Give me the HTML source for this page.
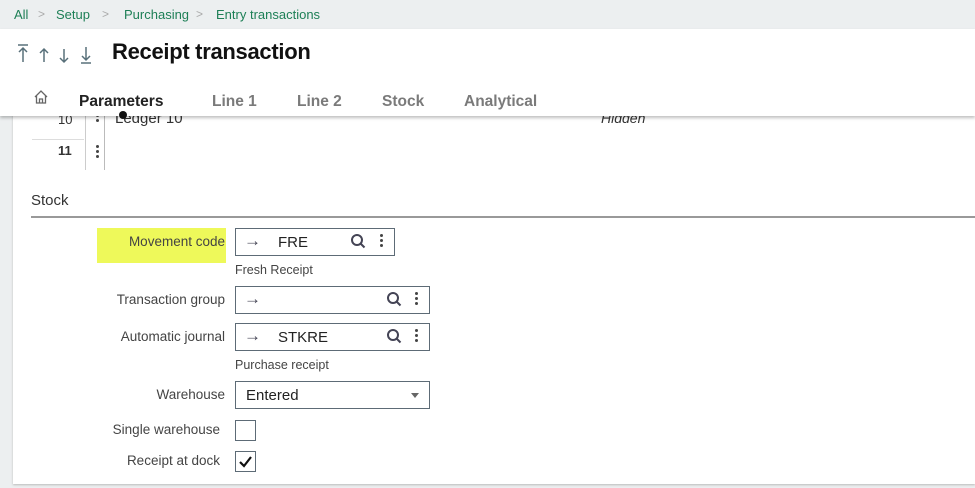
<!DOCTYPE html>
<html><head><style>
*{margin:0;padding:0;box-sizing:border-box}
body{width:975px;height:488px;overflow:hidden;background:#eceff0;font-family:"Liberation Sans",sans-serif;position:relative;color:#333}
.a{position:absolute;white-space:nowrap}
.panel{position:absolute;left:13px;top:110px;width:962px;height:374px;background:#fff;box-shadow:0 1px 2px #bbb}
.hdr{position:absolute;left:0;top:29px;width:975px;height:87px;background:#fff;box-shadow:0 2px 3px rgba(0,0,0,.25)}
.bc{color:#1d7f56;font-size:13px;top:7px}
.sep{color:#aaa;font-size:12px;top:7px}
.tab{top:93px;font-size:15.5px;font-weight:bold;color:#7a7a7a}
.lbl{font-size:13.5px;color:#444;text-align:right;width:200px;left:25px}
.box{position:absolute;border:1px solid #5d6b76;background:#fff;height:28px}
.sub{font-size:12.5px;color:#444}
.arr{font-size:17px;color:#445}
.dots{position:absolute;width:3px}
.dots i{display:block;width:3px;height:3px;border-radius:50%;background:#444;margin-bottom:2px}
</style></head><body>
<div class="panel"></div>
<div class="a" style="left:85px;top:110px;width:1px;height:60px;background:#ccc"></div>
<div class="a" style="left:104px;top:110px;width:1px;height:60px;background:#bbb"></div>
<div class="a" style="left:32px;top:139px;width:52px;height:1px;background:#ddd"></div>
<div class="a" style="left:58px;top:112px;font-size:13px;color:#333">10</div>
<div class="dots" style="left:96px;top:114px"><i></i><i></i></div>
<div class="a" style="left:115px;top:110px;font-size:15px;color:#333">Ledger 10</div>
<div class="a" style="left:601px;top:110px;font-size:14px;font-style:italic;color:#333">Hidden</div>
<div class="a" style="left:58px;top:143px;font-size:13px;font-weight:bold;color:#333">11</div>
<div class="dots" style="left:96px;top:145px"><i></i><i></i><i></i></div>
<div class="hdr"></div>
<div class="a bc" style="left:14px">All</div><div class="a sep" style="left:38px">&gt;</div>
<div class="a bc" style="left:56px">Setup</div><div class="a sep" style="left:102px">&gt;</div>
<div class="a bc" style="left:124px">Purchasing</div><div class="a sep" style="left:196px">&gt;</div>
<div class="a bc" style="left:216px">Entry transactions</div>
<svg class="a" style="left:16px;top:43px" width="80" height="22" viewBox="0 0 80 22" fill="none" stroke="#58707a" stroke-width="1.5">
<path d="M2 2h10M7 5v14M3 9l4-4 4 4"/><path d="M28 6v13M24 10l4-4 4 4"/><path d="M48 6v13M44 15l4 4 4-4"/><path d="M70 4v13M66 13l4 4 4-4M65 20h10"/></svg>
<div class="a" style="left:112px;top:39px;font-size:22px;font-weight:bold;color:#111;letter-spacing:-.3px">Receipt transaction</div>
<svg class="a" style="left:33px;top:89px" width="16" height="16" viewBox="0 0 16 16" fill="none" stroke="#666" stroke-width="1.3"><path d="M2 8L8 2l6 6M3.5 7v7h9V7M6.5 14V10h3v4"/></svg>
<div class="a tab" style="left:79px;color:#222">Parameters</div>
<div class="a tab" style="left:212px">Line 1</div>
<div class="a tab" style="left:297px">Line 2</div>
<div class="a tab" style="left:382px">Stock</div>
<div class="a tab" style="left:464px">Analytical</div>
<div class="a" style="left:119px;top:111px;width:8px;height:8px;border-radius:50%;background:#111"></div>
<div class="a" style="left:31px;top:192px;font-size:15px;color:#333">Stock</div>
<div class="a" style="left:31px;top:216px;width:944px;height:2px;background:#999"></div>
<div class="a" style="left:97px;top:228px;width:129px;height:35px;background:#eef95a"></div>
<div class="a lbl" style="top:234px">Movement code</div>
<div class="box" style="left:235px;top:228px;width:160px"></div>
<div class="a arr" style="left:244px;top:231px">→</div>
<div class="a" style="left:278px;top:234px;font-size:15px;color:#222">FRE</div>
<div class="a sub" style="left:235px;top:263px">Fresh Receipt</div>
<div class="a lbl" style="top:292px">Transaction group</div>
<div class="box" style="left:235px;top:286px;width:195px"></div>
<div class="a arr" style="left:244px;top:289px">→</div>
<div class="a lbl" style="top:329px">Automatic journal</div>
<div class="box" style="left:235px;top:323px;width:195px"></div>
<div class="a arr" style="left:244px;top:326px">→</div>
<div class="a" style="left:278px;top:329px;font-size:15px;color:#222">STKRE</div>
<div class="a sub" style="left:235px;top:358px">Purchase receipt</div>
<svg class="a" style="left:350px;top:233px" width="16" height="16" viewBox="0 0 16 16" fill="none" stroke="#445" stroke-width="2"><circle cx="7" cy="7" r="5"/><path d="M11 11l3.5 3.5"/></svg>
<svg class="a" style="left:386px;top:291px" width="16" height="16" viewBox="0 0 16 16" fill="none" stroke="#445" stroke-width="2"><circle cx="7" cy="7" r="5"/><path d="M11 11l3.5 3.5"/></svg>
<svg class="a" style="left:386px;top:328px" width="16" height="16" viewBox="0 0 16 16" fill="none" stroke="#445" stroke-width="2"><circle cx="7" cy="7" r="5"/><path d="M11 11l3.5 3.5"/></svg>
<div class="dots" style="left:380px;top:234px"><i></i><i></i><i></i></div>
<div class="dots" style="left:415px;top:292px"><i></i><i></i><i></i></div>
<div class="dots" style="left:415px;top:329px"><i></i><i></i><i></i></div>
<div class="a lbl" style="top:387px">Warehouse</div>
<div class="box" style="left:235px;top:381px;width:195px"></div>
<div class="a" style="left:246px;top:387px;font-size:15px;color:#222">Entered</div>
<div class="a" style="left:411px;top:393px;width:0;height:0;border-left:4px solid transparent;border-right:4px solid transparent;border-top:5px solid #666"></div>
<div class="a lbl" style="top:422px;width:195px">Single warehouse</div>
<div class="a" style="left:235px;top:420px;width:21px;height:21px;border:1px solid #5d6b76"></div>
<div class="a lbl" style="top:453px;width:195px">Receipt at dock</div>
<div class="a" style="left:235px;top:451px;width:21px;height:21px;border:1px solid #5d6b76"></div>
<svg class="a" style="left:238px;top:455px" width="15" height="14" viewBox="0 0 15 14" fill="none" stroke="#111" stroke-width="2.2"><path d="M2 7l4 4 7-9"/></svg>
</body></html>
